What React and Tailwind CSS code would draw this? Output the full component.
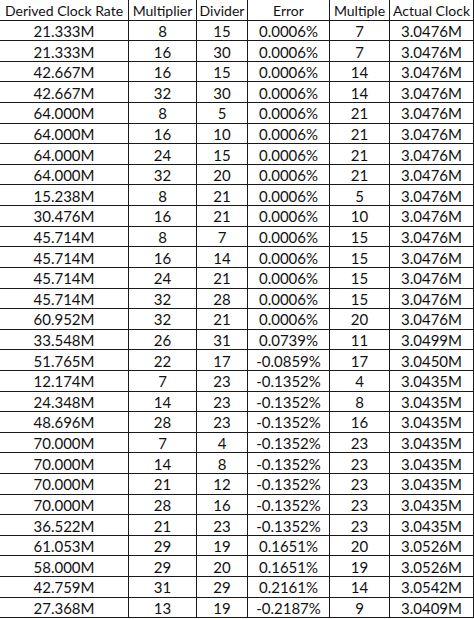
const headers = ["Derived Clock Rate", "Multiplier", "Divider", "Error", "Multiple", "Actual Clock"];

const rows = [
  ["21.333M", "8", "15", "0.0006%", "7", "3.0476M"],
  ["21.333M", "16", "30", "0.0006%", "7", "3.0476M"],
  ["42.667M", "16", "15", "0.0006%", "14", "3.0476M"],
  ["42.667M", "32", "30", "0.0006%", "14", "3.0476M"],
  ["64.000M", "8", "5", "0.0006%", "21", "3.0476M"],
  ["64.000M", "16", "10", "0.0006%", "21", "3.0476M"],
  ["64.000M", "24", "15", "0.0006%", "21", "3.0476M"],
  ["64.000M", "32", "20", "0.0006%", "21", "3.0476M"],
  ["15.238M", "8", "21", "0.0006%", "5", "3.0476M"],
  ["30.476M", "16", "21", "0.0006%", "10", "3.0476M"],
  ["45.714M", "8", "7", "0.0006%", "15", "3.0476M"],
  ["45.714M", "16", "14", "0.0006%", "15", "3.0476M"],
  ["45.714M", "24", "21", "0.0006%", "15", "3.0476M"],
  ["45.714M", "32", "28", "0.0006%", "15", "3.0476M"],
  ["60.952M", "32", "21", "0.0006%", "20", "3.0476M"],
  ["33.548M", "26", "31", "0.0739%", "11", "3.0499M"],
  ["51.765M", "22", "17", "-0.0859%", "17", "3.0450M"],
  ["12.174M", "7", "23", "-0.1352%", "4", "3.0435M"],
  ["24.348M", "14", "23", "-0.1352%", "8", "3.0435M"],
  ["48.696M", "28", "23", "-0.1352%", "16", "3.0435M"],
  ["70.000M", "7", "4", "-0.1352%", "23", "3.0435M"],
  ["70.000M", "14", "8", "-0.1352%", "23", "3.0435M"],
  ["70.000M", "21", "12", "-0.1352%", "23", "3.0435M"],
  ["70.000M", "28", "16", "-0.1352%", "23", "3.0435M"],
  ["36.522M", "21", "23", "-0.1352%", "23", "3.0435M"],
  ["61.053M", "29", "19", "0.1651%", "20", "3.0526M"],
  ["58.000M", "29", "20", "0.1651%", "19", "3.0526M"],
  ["42.759M", "31", "29", "0.2161%", "14", "3.0542M"],
  ["27.368M", "13", "19", "-0.2187%", "9", "3.0409M"],
];

// column widths incl. right border
const cols = "grid-cols-[129px_68px_51px_82px_60px_84px]";

function Row({ cells, head }) {
  return (
    <div className={`grid ${cols} h-[20.62px] ${head ? "text-[14px]" : "text-[15px]"}`}>
      {cells.map((c, i) => (
        <div
          key={i}
          className="flex items-center justify-center border-b border-r border-[#1a1a1a] pt-[2px] leading-none whitespace-nowrap overflow-visible"
        >
          {c}
        </div>
      ))}
    </div>
  );
}

export default function App() {
  return (
    <div className="w-[474px] h-[619px] overflow-hidden bg-white text-[#111] font-['Lato',sans-serif]">
      <Row cells={headers} head />
      {rows.map((r, i) => (
        <Row key={i} cells={r} />
      ))}
    </div>
  );
}
